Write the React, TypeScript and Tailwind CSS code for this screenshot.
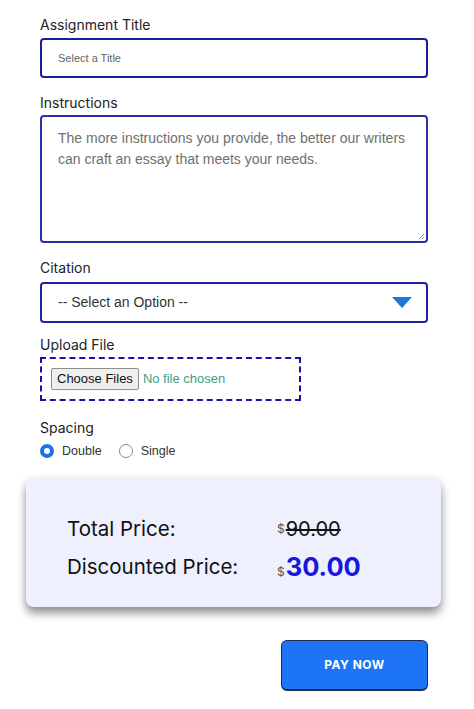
const label = "block text-[14px] leading-[18px] text-[#222] font-['Inter','Noto_Sans',sans-serif]";

function Radio({ checked, text }: { checked?: boolean; text: string }) {
  return (
    <label className="flex items-center gap-[8px]">
      {checked ? (
        <span className="w-[14px] h-[14px] rounded-full bg-[#1a73e8] flex items-center justify-center">
          <span className="w-[6px] h-[6px] rounded-full bg-white" />
        </span>
      ) : (
        <span className="w-[14px] h-[14px] rounded-full border border-[#8a8a8a] bg-white" />
      )}
      <span className="text-[12.5px] leading-[16px] text-[#333]">{text}</span>
    </label>
  );
}

export default function App() {
  return (
    <div className="w-[474px] min-h-[709px] bg-white font-['Liberation_Sans',Arial,sans-serif] pt-[16px]">
      <div className="ml-[40px] w-[388px]">
        <span className={label}>Assignment Title</span>
        <div className="mt-[4px] h-[40px] rounded-[4px] border-2 border-[#1c1ca0] flex items-center pl-[16px]">
          <span className="text-[11px] text-[#666]">Select a Title</span>
        </div>

        <span className={`${label} mt-[16px]`}>Instructions</span>
        <div className="relative mt-[3px] h-[128px] rounded-[4px] border-2 border-[#2b2ea6] pl-[16px] pr-[12px] pt-[11px]">
          <p className="text-[14px] leading-[21px] text-[#6f6f6f]">
            The more instructions you provide, the better our writers can craft an essay that meets your needs.
          </p>
          <svg className="absolute right-[1px] bottom-[1px]" width="8" height="8" viewBox="0 0 8 8">
            <path d="M7 2L2 7M7 5L5 7" stroke="#999" strokeWidth="1" />
          </svg>
        </div>

        <span className={`${label} mt-[16px]`}>Citation</span>
        <div className="mt-[5px] h-[41px] rounded-[4px] border-2 border-[#2020a8] flex items-center justify-between pl-[16px] pr-[14px]">
          <span className="text-[14px] text-[#333]">-- Select an Option --</span>
          <svg width="20" height="11" viewBox="0 0 20 11">
            <path d="M0 0H20L10 11Z" fill="#1a78d6" />
          </svg>
        </div>

        <span className={`${label} mt-[13px]`}>Upload File</span>
        <div className="mt-[3px] w-[261px] h-[44px] border-2 border-dashed border-[#1414a8] flex items-center pl-[9px] gap-[4px]">
          <span className="h-[22px] px-[5px] flex items-center rounded-[2px] border border-[#8f8f8f] bg-[#efefef] text-[13px] text-[#111]">
            Choose Files
          </span>
          <span className="text-[13px] text-[#3a9f86]">No file chosen</span>
        </div>

        <span className={`${label} mt-[18px]`}>Spacing</span>
        <div className="mt-[6px] flex items-center gap-[17px]">
          <Radio checked text="Double" />
          <Radio text="Single" />
        </div>
      </div>

      <div className="ml-[26px] mt-[18px] w-[415px] h-[130px] rounded-[8px] bg-[#eef0fd] shadow-[0_6px_10px_rgba(0,0,0,0.45)] pl-[41px] pt-[38px] font-['Inter','Noto_Sans',sans-serif]">
        <div className="grid grid-cols-[210px_1fr] items-center gap-y-[6px]">
          <span className="text-[20.5px] leading-[28px] text-[#111]">Total Price:</span>
          <span className="flex items-end leading-[28px]">
            <span className="text-[12px] text-[#555] mr-[1px]">$</span>
            <span className="text-[20px] text-[#111] line-through decoration-[2px]">90.00</span>
          </span>
          <span className="text-[20.5px] leading-[36px] text-[#111]">Discounted Price:</span>
          <span className="flex items-end leading-[36px]">
            <span className="text-[12px] leading-[26px] text-[#555] mr-[1px]">$</span>
            <span className="text-[25.5px] font-bold text-[#1717e0]">30.00</span>
          </span>
        </div>
      </div>

      <div className="flex justify-end w-[428px] mt-[33px]">
        <button className="w-[147px] h-[51px] rounded-[6px] bg-[#1d74f7] border border-[#1f2d4a] border-b-2 text-white text-[12px] font-bold tracking-[0.5px] font-['Inter','Noto_Sans',sans-serif]">
          PAY NOW
        </button>
      </div>
    </div>
  );
}
